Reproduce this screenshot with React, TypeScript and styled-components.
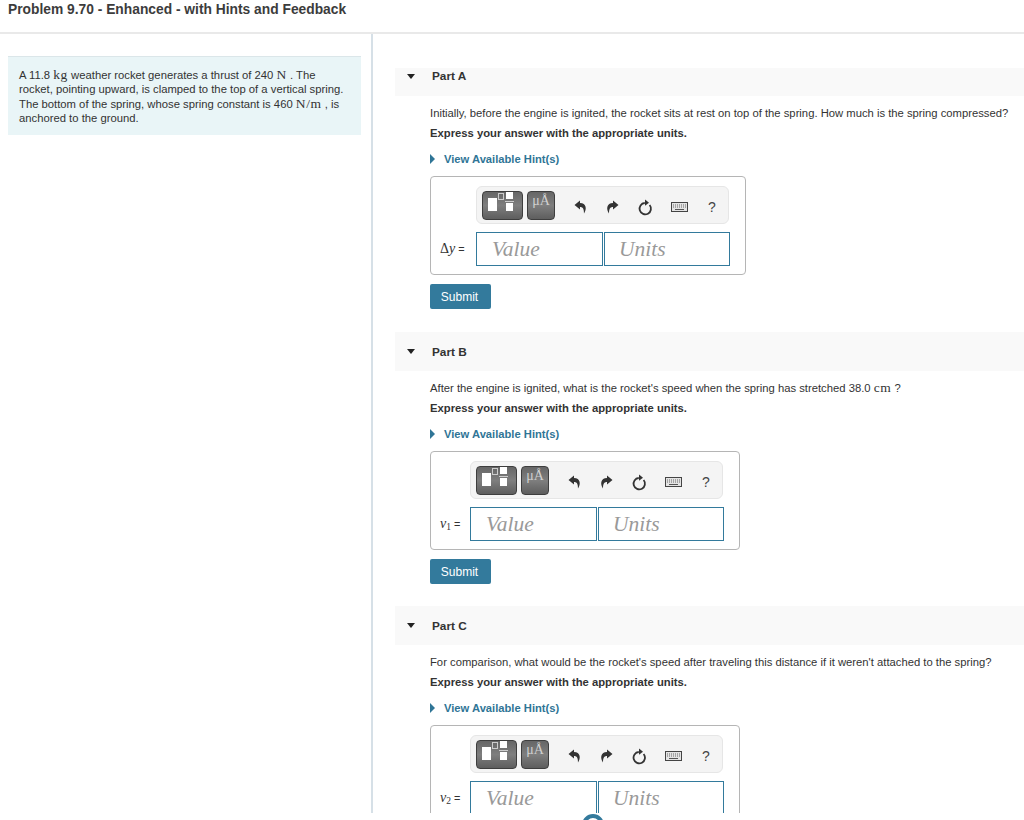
import React from "react";
import styled, { createGlobalStyle } from "styled-components";

const Global = createGlobalStyle`
  html, body { margin: 0; padding: 0; background: #fff; }
  body { font-family: "Liberation Sans", Arial, sans-serif; color: #333; }
`;

const Page = styled.div`
  position: relative;
  width: 1024px;
  height: 820px;
  overflow: hidden;
`;
const Header = styled.header`
  height: 32px;
  box-sizing: content-box;
  border-bottom: 2px solid #e9e9e9;
`;
const Title = styled.h1`
  margin: 0;
  padding: 1px 0 0 8px;
  font-size: 13.8px;
  line-height: 17px;
  font-weight: 700;
  color: #3c3c3c;
`;
const Body = styled.div`
  display: flex;
  height: 779px;
  overflow: hidden;
`;
const Aside = styled.aside`
  width: 373px;
  flex: none;
  box-sizing: border-box;
  padding: 22px 10px 0 8px;
  border-right: 2px solid #d6e0e7;
`;
const Statement = styled.div`
  box-sizing: border-box;
  height: 79px;
  padding: 11px 11px 0;
  background: #e9f5f7;
  border-top: 1px solid #dbe6e9;
  font-size: 11.27px;
  line-height: 14.4px;
  color: #333;
`;
const Mathy = styled.span`
  font-family: "Liberation Serif", serif;
  font-size: 13.5px;
  letter-spacing: 0.6px;
`;
const Main = styled.main`
  flex: 1;
  min-width: 0;
  padding: 34px 0 0 22px;
`;
const PartHeader = styled.div<{ $h: number; $mt: number; $pb: number }>`
  display: flex;
  align-items: center;
  gap: 17px;
  height: ${(p) => p.$h}px;
  margin-top: ${(p) => p.$mt}px;
  padding: 0 0 ${(p) => p.$pb}px 12px;
  box-sizing: border-box;
  background: #f9f9f9;
`;
const PartCaret = styled.span`
  width: 0;
  height: 0;
  border-left: 4.5px solid transparent;
  border-right: 4.5px solid transparent;
  border-top: 5px solid #222;
`;
const PartTitle = styled.span`
  font-size: 11.8px;
  font-weight: 700;
  color: #333;
`;
const Content = styled.div`
  padding-left: 35px;
`;
const Question = styled.p`
  margin: 9px 0 0;
  font-size: 11.25px;
  line-height: 16px;
  white-space: nowrap;
`;
const Instruction = styled.p`
  margin: 4px 0 0;
  font-size: 11.25px;
  line-height: 16px;
  font-weight: 700;
`;
const HintRow = styled.div`
  display: flex;
  align-items: center;
  gap: 9px;
  margin-top: 10px;
  height: 16px;
  font-size: 11.2px;
  font-weight: 700;
  color: #2f7596;
`;
const HintCaret = styled.span`
  width: 0;
  height: 0;
  border-top: 5px solid transparent;
  border-bottom: 5px solid transparent;
  border-left: 5px solid #2f7596;
`;
const Widget = styled.div`
  display: inline-grid;
  grid-template-columns: auto auto;
  column-gap: 8px;
  row-gap: 8px;
  box-sizing: border-box;
  margin-top: 9px;
  padding: 9px 15px 8px 9px;
  border: 1px solid #b5b5b5;
  border-radius: 4px;
  vertical-align: top;
`;
const Toolbar = styled.div`
  grid-column: 2;
  display: flex;
  align-items: center;
  box-sizing: border-box;
  height: 38px;
  width: 253px;
  padding: 0 0 0 5px;
  background: #f4f4f4;
  border: 1px solid #e6e6e6;
  border-radius: 6px;
`;
const ToolButton = styled.span<{ $w: number }>`
  display: flex;
  justify-content: center;
  box-sizing: border-box;
  width: ${(p) => p.$w}px;
  height: 29px;
  margin-right: 4px;
  border: 1px solid #3e3e3e;
  border-radius: 4px;
  background: linear-gradient(#666, #7e7e7e 50%, #5e5e5e);
`;
const MuText = styled.span`
  font-family: "Liberation Serif", serif;
  font-size: 14px;
  line-height: 17px;
  color: #d0d0d0;
`;
const Icons = styled.div`
  display: flex;
  flex: 1;
  align-items: center;
  justify-content: space-between;
  padding: 4px 11px 0 15px;
`;
const Help = styled.span`
  width: 10px;
  text-align: center;
  font-size: 14px;
  color: #444;
`;
const VarLabel = styled.div<{ $w: number }>`
  width: ${(p) => p.$w}px;
  align-self: center;
  font-size: 10.9px;
  white-space: nowrap;
  color: #333;
`;
const VarName = styled.span`
  font-family: "Liberation Serif", serif;
  font-size: 14px;
  font-style: italic;
`;
const Delta = styled.span`
  font-family: "Liberation Serif", serif;
  font-size: 14px;
`;
const Sub = styled.span`
  font-family: "Liberation Serif", serif;
  font-size: 9.5px;
  position: relative;
  top: 2px;
  margin-right: 3px;
`;
const Inputs = styled.div`
  display: flex;
  gap: 1px;
`;
const Field = styled.div<{ $w: number; $pl: number }>`
  box-sizing: border-box;
  width: ${(p) => p.$w}px;
  height: 34px;
  padding-left: ${(p) => p.$pl}px;
  border: 1px solid #337a9c;
  font-family: "Liberation Serif", serif;
  font-style: italic;
  font-size: 21.5px;
  line-height: 32px;
  color: #999;
`;
const Submit = styled.button`
  display: block;
  width: 61px;
  height: 25px;
  margin-top: 9px;
  padding: 0 2px 0 0;
  border: none;
  border-radius: 2px;
  background: #337a9c;
  color: #fff;
  font-family: inherit;
  font-size: 12px;
`;
const Spinner = styled.div`
  position: absolute;
  left: 582px;
  top: 814px;
  box-sizing: border-box;
  width: 22px;
  height: 22px;
  border: 4px solid #337a9c;
  border-radius: 50%;
`;

const TemplateGlyph = () => (
  <svg width="39" height="27" viewBox="0 0 39 27">
    <rect x="5" y="6" width="9" height="13" fill="#fff" />
    <rect x="15.5" y="1.5" width="5" height="6" fill="none" stroke="#ccc" />
    <rect x="23" y="0" width="7" height="7" fill="#fff" />
    <rect x="22" y="9" width="9" height="1" fill="#ccc" />
    <rect x="23" y="11" width="7" height="8" fill="#fff" />
  </svg>
);
const Undo = () => (
  <svg width="13" height="14" viewBox="0 0 13 14">
    <path d="M6 0.5 L0.5 5 L6 9.5 V7 C9 7 10 9 10 13.5 C13 9 12.5 3.2 6 3 Z" fill="#333" />
  </svg>
);
const Redo = () => (
  <svg width="13" height="14" viewBox="0 0 13 14">
    <path d="M7 0.5 L12.5 5 L7 9.5 V7 C4 7 3 9 3 13.5 C0 9 0.5 3.2 7 3 Z" fill="#333" />
  </svg>
);
const Reset = () => (
  <svg width="15" height="17" viewBox="0 0 15 17">
    <path d="M11.6 6 A5.7 5.7 0 1 1 6.8 4" fill="none" stroke="#333" strokeWidth="1.8" />
    <path d="M7 0.6 L11 3.8 L7 6.8 Z" fill="#333" />
  </svg>
);
const Keyboard = () => (
  <svg width="17" height="10" viewBox="0 0 17 10">
    <rect x="0.5" y="0.5" width="16" height="9" fill="#e4e4e4" stroke="#444" />
    <path d="M2 3h13M2 5h13" stroke="#666" strokeDasharray="1 1" />
    <path d="M4 7.5h9" stroke="#555" />
  </svg>
);

type PartProps = {
  name: string;
  h: number;
  mt: number;
  pb?: number;
  question: React.ReactNode;
  label: React.ReactNode;
  labelW: number;
  last?: boolean;
};

const Part = ({ name, h, mt, pb = 0, question, label, labelW, last }: PartProps) => (
  <section>
    <PartHeader $h={h} $mt={mt} $pb={pb}>
      <PartCaret />
      <PartTitle>{name}</PartTitle>
    </PartHeader>
    <Content>
      <Question>{question}</Question>
      <Instruction>Express your answer with the appropriate units.</Instruction>
      <HintRow>
        <HintCaret />
        View Available Hint(s)
      </HintRow>
      <Widget>
        <Toolbar>
          <ToolButton $w={41}>
            <TemplateGlyph />
          </ToolButton>
          <ToolButton $w={28}>
            <MuText>μÅ</MuText>
          </ToolButton>
          <Icons>
            <Undo />
            <Redo />
            <Reset />
            <Keyboard />
            <Help>?</Help>
          </Icons>
        </Toolbar>
        <VarLabel $w={labelW}>{label}</VarLabel>
        <Inputs>
          <Field $w={127} $pl={15}>Value</Field>
          <Field $w={126} $pl={14}>Units</Field>
        </Inputs>
      </Widget>
      {!last && <Submit>Submit</Submit>}
    </Content>
  </section>
);

export default function App() {
  return (
    <Page>
      <Global />
      <Header>
        <Title>Problem 9.70 - Enhanced - with Hints and Feedback</Title>
      </Header>
      <Body>
        <Aside>
          <Statement>
            A 11.8 <Mathy>kg</Mathy> weather rocket generates a thrust of 240 <Mathy>N</Mathy> . The
            <br />
            rocket, pointing upward, is clamped to the top of a vertical spring.
            <br />
            The bottom of the spring, whose spring constant is 460 <Mathy>N/m</Mathy> , is
            <br />
            anchored to the ground.
          </Statement>
        </Aside>
        <Main>
          <Part
            name="Part A"
            h={28}
            mt={0}
            pb={12}
            question="Initially, before the engine is ignited, the rocket sits at rest on top of the spring. How much is the spring compressed?"
            label={<><Delta>Δ</Delta><VarName>y</VarName> =</>}
            labelW={28}
          />
          <Part
            name="Part B"
            h={39}
            mt={23}
            question={<>After the engine is ignited, what is the rocket's speed when the spring has stretched 38.0 <Mathy>cm</Mathy> ?</>}
            label={<><VarName>v</VarName><Sub>1</Sub>=</>}
            labelW={22}
          />
          <Part
            name="Part C"
            h={39}
            mt={22}
            question="For comparison, what would be the rocket's speed after traveling this distance if it weren't attached to the spring?"
            label={<><VarName>v</VarName><Sub>2</Sub>=</>}
            labelW={22}
            last
          />
        </Main>
      </Body>
      <Spinner />
    </Page>
  );
}
